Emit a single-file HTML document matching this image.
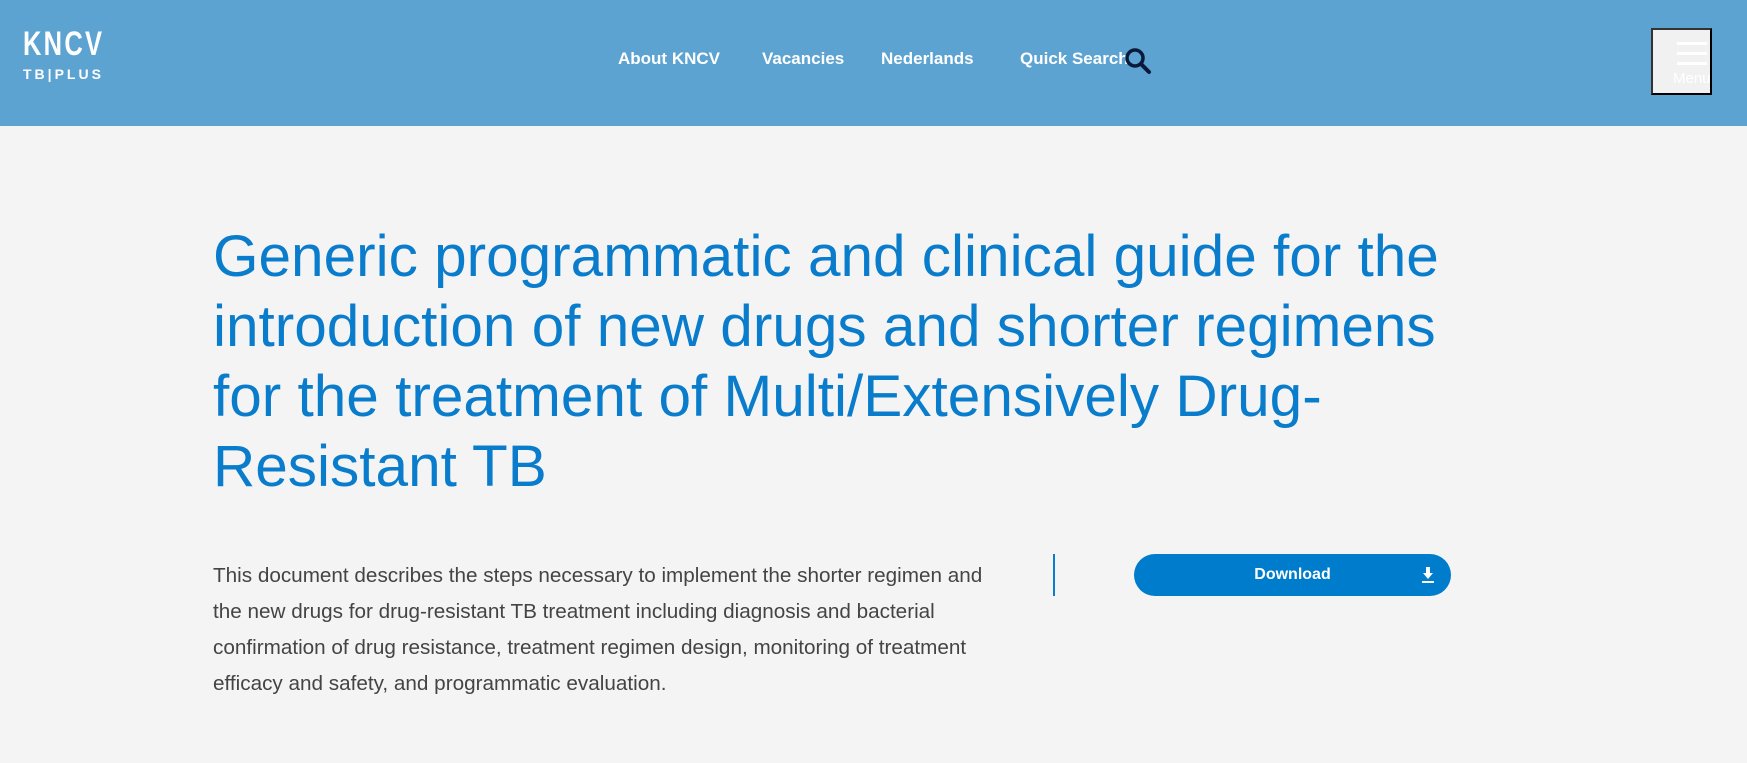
<!DOCTYPE html>
<html><head><meta charset="utf-8"><style>
body{margin:0;width:1747px;height:763px;background:#f4f4f4;font-family:"Liberation Sans",sans-serif;overflow:hidden;position:relative}
.hd{position:absolute;left:0;top:0;width:1747px;height:126px;background:#5ca3d2}
.logo{position:absolute;left:23px;top:28px;color:#fff}
.logo .k{font-size:34px;font-weight:bold;letter-spacing:3px;transform:scaleX(.75);transform-origin:left;line-height:32px}
.logo .t{font-size:14px;font-weight:bold;letter-spacing:3px;margin-top:6px}
.nav a{position:absolute;top:49px;color:#fff;font-weight:bold;font-size:17px;text-decoration:none}
.menu{position:absolute;left:1651px;top:28px;width:57px;height:63px;background:#f1f1f1;border:2px solid #333;border-right-color:#000;border-bottom-color:#000}
.menu i{position:absolute;left:24px;width:30px;height:3px;background:#fff}
.menu span{position:absolute;left:20px;top:40px;color:#fff;font-size:15px}
h1{position:absolute;left:213px;top:222px;margin:0;font-weight:normal;font-size:58.5px;line-height:70px;color:#0a7ccc;white-space:nowrap}
p{position:absolute;left:213px;top:558px;margin:0;font-size:20.7px;line-height:36px;color:#444;white-space:nowrap}
.vl{position:absolute;left:1053px;top:554px;width:2px;height:42px;background:#0a7ccc}
.btn{position:absolute;left:1134px;top:554px;width:317px;height:42px;border-radius:21px;background:#007ccd;color:#fff;font-weight:bold;font-size:16px;line-height:42px;text-align:center}
</style></head><body>
<div class="hd">
<div class="logo"><div class="k">KNCV</div><div class="t">TB|PLUS</div></div>
<div class="nav"><a style="left:618px">About KNCV</a><a style="left:762px">Vacancies</a><a style="left:881px">Nederlands</a><a style="left:1020px">Quick Search</a></div>
<svg style="position:absolute;left:1124px;top:47px" width="28" height="28" viewBox="0 0 28 28"><circle cx="11" cy="11" r="8" fill="none" stroke="#0a1a3a" stroke-width="3.5"/><line x1="17" y1="17" x2="25" y2="25" stroke="#0a1a3a" stroke-width="4" stroke-linecap="round"/></svg>
<div class="menu"><i style="top:12px"></i><i style="top:22px"></i><i style="top:32px"></i><span>Menu</span></div>
</div>
<h1>Generic programmatic and clinical guide for the<br>introduction of new drugs and shorter regimens<br>for the treatment of Multi/Extensively Drug-<br>Resistant TB</h1>
<p>This document describes the steps necessary to implement the shorter regimen and<br>the new drugs for drug-resistant TB treatment including diagnosis and bacterial<br>confirmation of drug resistance, treatment regimen design, monitoring of treatment<br>efficacy and safety, and programmatic evaluation.</p>
<div class="vl"></div>
<div class="btn">Download
<svg style="position:absolute;right:16px;top:13px" width="14" height="17" viewBox="0 0 14 17"><path d="M5 0h4v6h3l-5 6-5-6h3z" fill="#fff"/><rect x="1" y="14" width="12" height="2" fill="#fff"/></svg></div>
</body></html>
